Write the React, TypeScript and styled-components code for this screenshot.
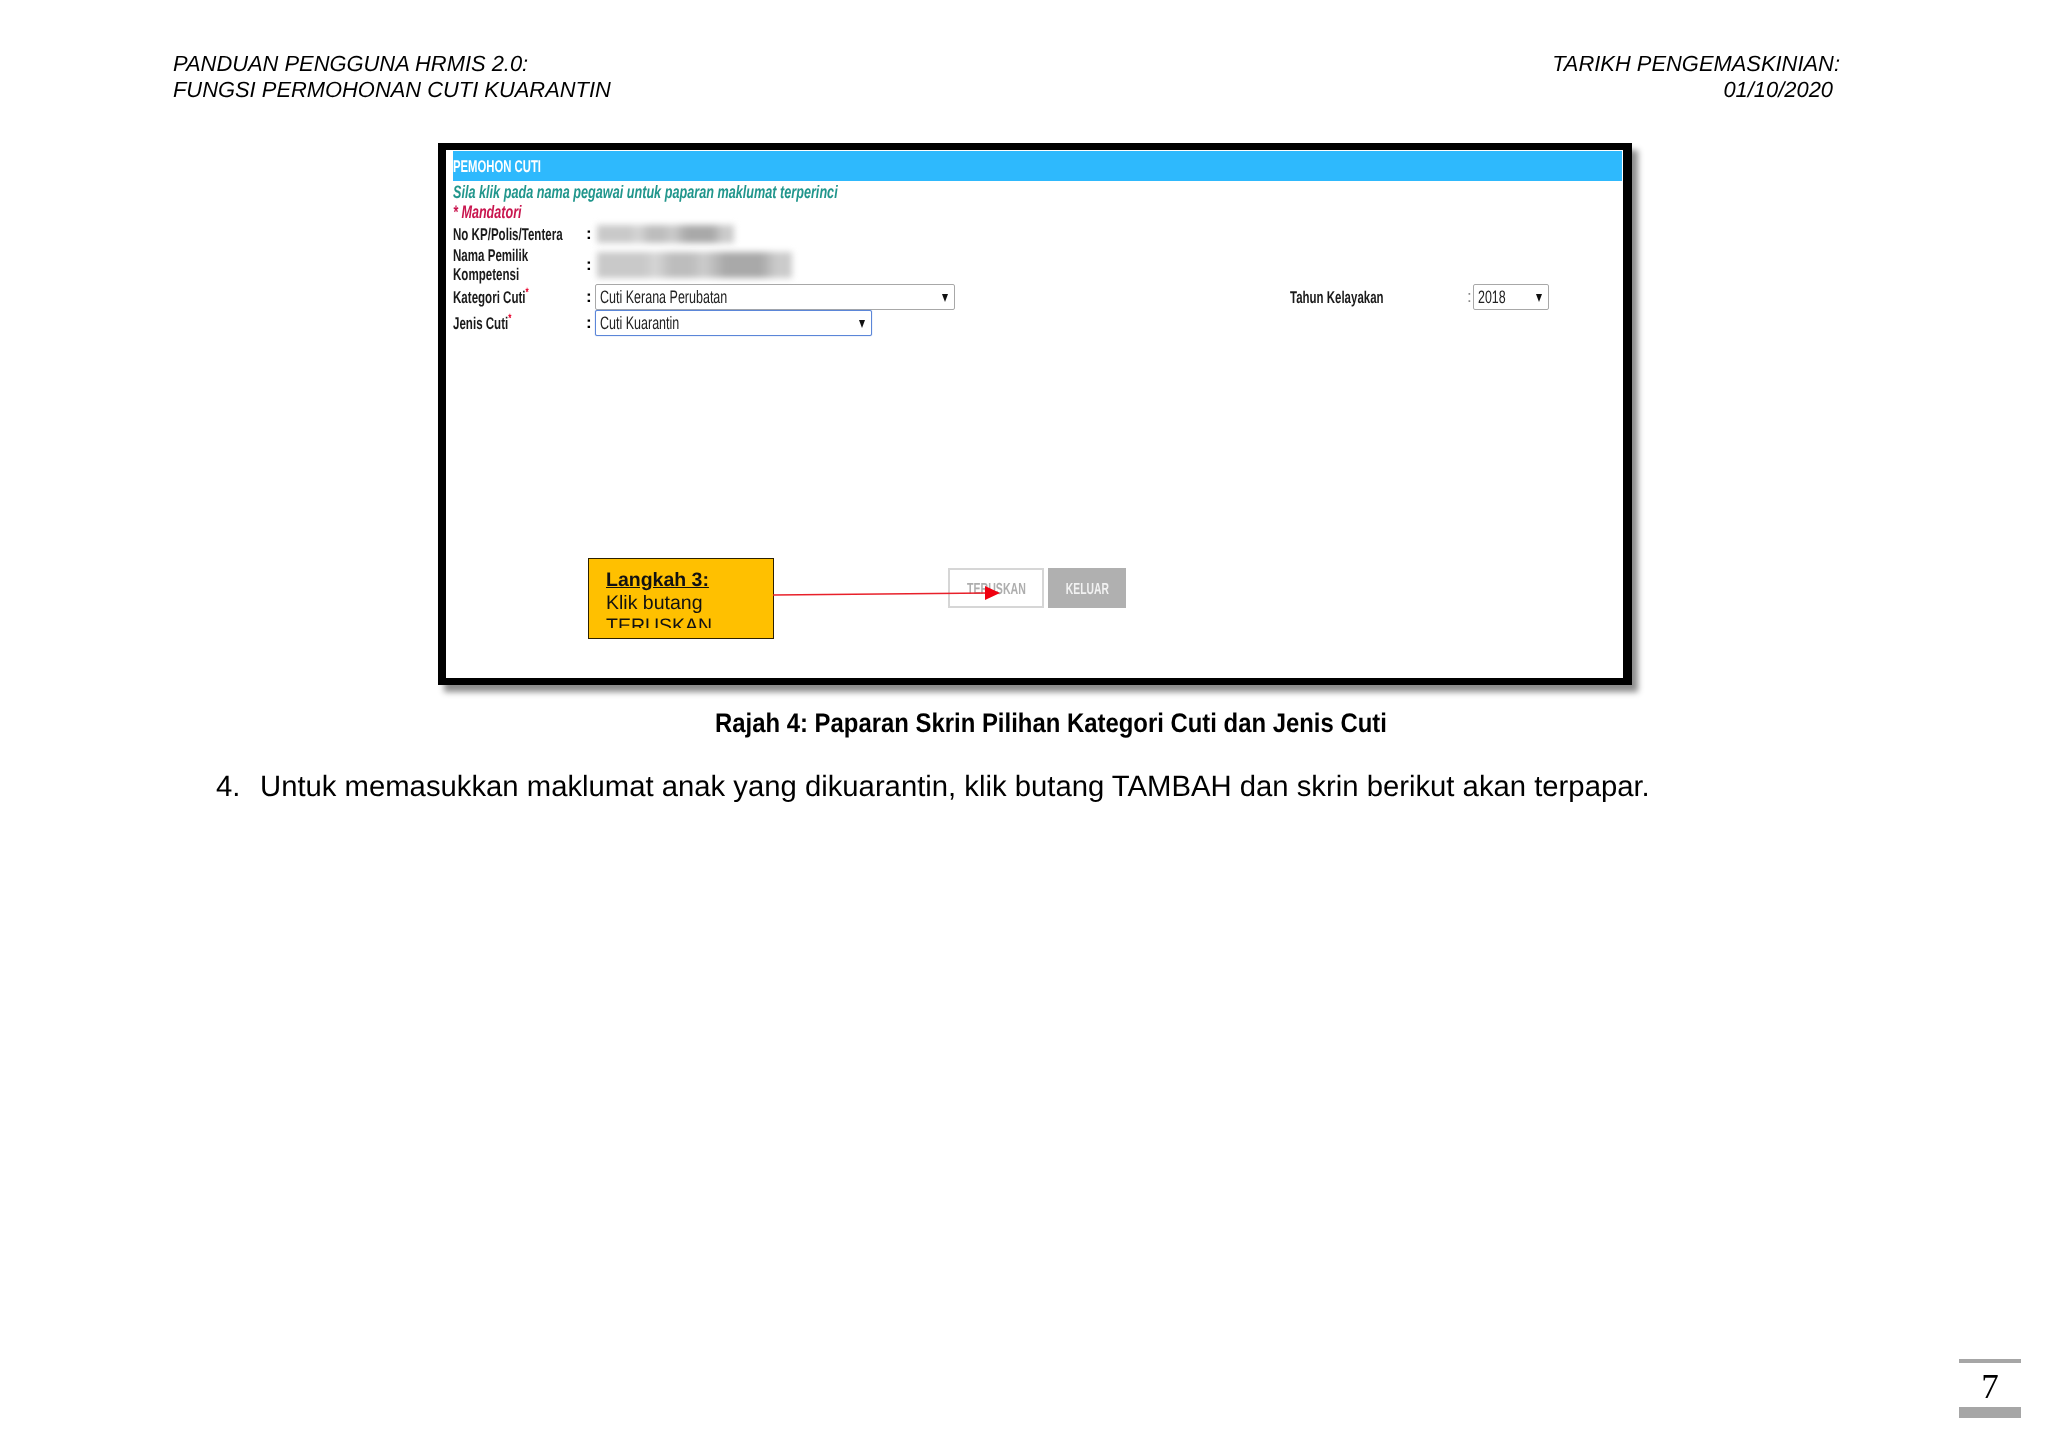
import styled, { createGlobalStyle } from 'styled-components';

const GlobalStyle = createGlobalStyle`
  html, body {
    margin: 0;
    padding: 0;
    background: #fff;
  }
  body {
    font-family: 'Liberation Sans', Arial, sans-serif;
    color: #000;
    text-rendering: geometricPrecision;
  }
`;

const Page = styled.div`
  display: flex;
  flex-direction: column;
  box-sizing: border-box;
  width: 2048px;
  height: 1448px;
  padding: 51px 0 30px 173px;
  filter: blur(0.3px);
`;

const DocHeader = styled.header`
  display: flex;
  justify-content: space-between;
  width: 1667px;
  font-size: 21.9px;
  font-style: italic;
  line-height: 26px;
`;

const HeaderRight = styled.div`
  text-align: right;
`;

const HeaderDate = styled.div`
  padding-right: 7px;
`;

const Frame = styled.div`
  box-sizing: border-box;
  width: 1194px;
  height: 542px;
  margin: 40px 0 0 265px;
  border-style: solid;
  border-color: #000;
  border-width: 7px 9px 7px 8px;
  background: #fff;
  box-shadow: 6px 7px 6px rgba(0, 0, 0, 0.45);
`;

const Shot = styled.div`
  padding: 1px 1px 0 7px;
  filter: blur(0.4px);
`;

// the screenshot in the document was squeezed sideways, so its text is too
const Squeezed = styled.span<{ $scale: number; $origin?: string }>`
  display: inline-block;
  transform: scaleX(${({ $scale }) => $scale});
  transform-origin: ${({ $origin }) => $origin ?? 'left'} center;
  white-space: nowrap;
`;

const TitleBar = styled.div`
  height: 30px;
  background: #2eb9fd;
  color: #fff;
  font-size: 17px;
  font-weight: 700;
  line-height: 31px;
`;

const Hint = styled.div`
  height: 24px;
  color: #21968c;
  font-size: 18px;
  font-style: italic;
  font-weight: 700;
  line-height: 22px;
`;

const Mandatory = styled.div`
  height: 18px;
  color: #c9164f;
  font-size: 18px;
  font-style: italic;
  font-weight: 700;
  line-height: 15px;
`;

const Row = styled.div<{ $height: number }>`
  display: flex;
  align-items: center;
  height: ${({ $height }) => $height}px;
`;

const Label = styled.div<{ $width?: number; $gap?: number }>`
  width: ${({ $width }) => $width ?? 133}px;
  flex: none;
  margin-left: ${({ $gap }) => $gap ?? 0}px;
  color: #1a1a1a;
  font-size: 17px;
  font-weight: 700;
  line-height: 19px;
`;

const Required = styled.sup`
  color: #e8002c;
  font-size: 12px;
  font-weight: 700;
  line-height: 0;
`;

const Colon = styled.div<{ $faint?: boolean }>`
  width: ${({ $faint }) => ($faint ? 6 : 9)}px;
  flex: none;
  color: ${({ $faint }) => ($faint ? '#888' : '#000')};
  font-size: 17px;
  font-weight: ${({ $faint }) => ($faint ? 400 : 700)};
`;

const Redacted = styled.div<{ $width: number; $height: number }>`
  width: ${({ $width }) => $width}px;
  height: ${({ $height }) => $height}px;
  margin-left: 2px;
  background: linear-gradient(90deg, #c9c9c9 0 24%, #d6d6d6 30%, #bdbdbd 38% 48%, #cccccc 55%, #a9a9a9 66% 84%, #cbcbcb 92%);
  filter: blur(3px);
`;

const Select = styled.div<{ $width: number; $focused?: boolean }>`
  display: flex;
  align-items: center;
  justify-content: space-between;
  box-sizing: border-box;
  flex: none;
  width: ${({ $width }) => $width}px;
  height: 26px;
  padding: 1px 6px 0 4px;
  border: 1px solid ${({ $focused }) => ($focused ? '#5b86d8' : '#a8a8a8')};
  border-radius: 2px;
  background: #fff;
  box-shadow: ${({ $focused }) => ($focused ? '0 0 1px #5b86d8' : 'none')};
  color: #222;
  font-size: 18px;
`;

const Caret = styled.span`
  width: 0;
  height: 0;
  border-top: 8px solid #111;
  border-left: 3px solid transparent;
  border-right: 3px solid transparent;
`;

const Actions = styled.div`
  position: relative;
  display: flex;
  align-items: flex-start;
  margin: 222px 0 0 135px;
`;

const Callout = styled.div`
  box-sizing: border-box;
  flex: none;
  width: 186px;
  height: 81px;
  padding: 10px 0 0 17px;
  border: 1px solid #2c2000;
  background: #ffc000;
  color: #111;
  font-size: 19.5px;
  line-height: 23px;
`;

const CalloutText = styled.div`
  height: 59px;
  overflow: hidden;
`;

const CalloutTitle = styled.div`
  font-weight: 700;
  text-decoration: underline;
`;

const Buttons = styled.div`
  display: flex;
  gap: 4px;
  margin: 10px 0 0 174px;
`;

const ContinueButton = styled.div`
  display: flex;
  align-items: center;
  justify-content: center;
  box-sizing: border-box;
  width: 96px;
  height: 40px;
  padding-top: 3px;
  border: 2px solid #d6d6d6;
  color: #aeaeae;
  font-size: 16px;
  font-weight: 700;
`;

const ExitButton = styled.div`
  display: flex;
  align-items: center;
  justify-content: center;
  box-sizing: border-box;
  width: 78px;
  height: 40px;
  padding-top: 3px;
  background: #b0b0b0;
  color: #f2f2f2;
  font-size: 16px;
  font-weight: 700;
`;

const Arrow = styled.svg`
  position: absolute;
  top: 26px;
  left: 185px;
`;

const Caption = styled.div`
  margin: 22px 0 0 542px;
  font-size: 27px;
  font-weight: 700;
  line-height: 32px;
`;

const ListItem = styled.div`
  display: flex;
  margin: 30px 0 0 43px;
  font-size: 29.27px;
  line-height: 36px;
  white-space: nowrap;
`;

const ListNumber = styled.span`
  width: 44px;
`;

const PageNumber = styled.div`
  align-self: flex-end;
  box-sizing: border-box;
  width: 62px;
  height: 59px;
  margin: auto 27px 0 0;
  border-top: 4px solid #a6a6a6;
  border-bottom: 11px solid #a6a6a6;
  font-family: 'Liberation Serif', 'Times New Roman', serif;
  font-size: 35px;
  line-height: 47px;
  text-align: center;
`;

const App = () => (
  <>
    <GlobalStyle />
    <Page>
      <DocHeader>
        <div>
          <div>PANDUAN PENGGUNA HRMIS 2.0:</div>
          <div>FUNGSI PERMOHONAN CUTI KUARANTIN</div>
        </div>
        <HeaderRight>
          <div>TARIKH PENGEMASKINIAN:</div>
          <HeaderDate>01/10/2020</HeaderDate>
        </HeaderRight>
      </DocHeader>

      <Frame>
        <Shot>
          <TitleBar>
            <Squeezed $scale={0.665}>PEMOHON CUTI</Squeezed>
          </TitleBar>
          <Hint>
            <Squeezed $scale={0.703}>Sila klik pada nama pegawai untuk paparan maklumat terperinci</Squeezed>
          </Hint>
          <Mandatory>
            <Squeezed $scale={0.7}>* Mandatori</Squeezed>
          </Mandatory>
          <Row $height={22}>
            <Label>
              <Squeezed $scale={0.68}>No KP/Polis/Tentera</Squeezed>
            </Label>
            <Colon>:</Colon>
            <Redacted $width={137} $height={18} />
          </Row>
          <Row $height={39}>
            <Label>
              <Squeezed $scale={0.68}>Nama Pemilik</Squeezed>
              <br />
              <Squeezed $scale={0.68}>Kompetensi</Squeezed>
            </Label>
            <Colon>:</Colon>
            <Redacted $width={195} $height={26} />
          </Row>
          <Row $height={26}>
            <Label>
              <Squeezed $scale={0.68}>
                Kategori Cuti<Required>*</Required>
              </Squeezed>
            </Label>
            <Colon>:</Colon>
            <Select $width={360}>
              <Squeezed $scale={0.695}>Cuti Kerana Perubatan</Squeezed>
              <Caret />
            </Select>
            <Label $width={177} $gap={335}>
              <Squeezed $scale={0.675}>Tahun Kelayakan</Squeezed>
            </Label>
            <Colon $faint>:</Colon>
            <Select $width={76}>
              <Squeezed $scale={0.69}>2018</Squeezed>
              <Caret />
            </Select>
          </Row>
          <Row $height={26}>
            <Label>
              <Squeezed $scale={0.68}>
                Jenis Cuti<Required>*</Required>
              </Squeezed>
            </Label>
            <Colon>:</Colon>
            <Select $width={277} $focused>
              <Squeezed $scale={0.695}>Cuti Kuarantin</Squeezed>
              <Caret />
            </Select>
          </Row>
          <Actions>
            <Callout>
              <CalloutText>
                <CalloutTitle>Langkah 3:</CalloutTitle>
                <div>Klik butang</div>
                <div>TERUSKAN</div>
              </CalloutText>
            </Callout>
            <Buttons>
              <ContinueButton>
                <Squeezed $scale={0.66} $origin="center">
                  TERUSKAN
                </Squeezed>
              </ContinueButton>
              <ExitButton>
                <Squeezed $scale={0.645} $origin="center">
                  KELUAR
                </Squeezed>
              </ExitButton>
            </Buttons>
            <Arrow width="232" height="24" viewBox="0 0 232 24">
              <line x1="0" y1="11" x2="216" y2="9" stroke="#e8202a" strokeWidth="1.5" />
              <polygon points="212,2 212,16 227,9" fill="#f00010" />
            </Arrow>
          </Actions>
        </Shot>
      </Frame>

      <Caption>
        <Squeezed $scale={0.885}>Rajah 4: Paparan Skrin Pilihan Kategori Cuti dan Jenis Cuti</Squeezed>
      </Caption>

      <ListItem>
        <ListNumber>4.</ListNumber>
        <span>Untuk memasukkan maklumat anak yang dikuarantin, klik butang TAMBAH dan skrin berikut akan terpapar.</span>
      </ListItem>

      <PageNumber>7</PageNumber>
    </Page>
  </>
);

export default App;
